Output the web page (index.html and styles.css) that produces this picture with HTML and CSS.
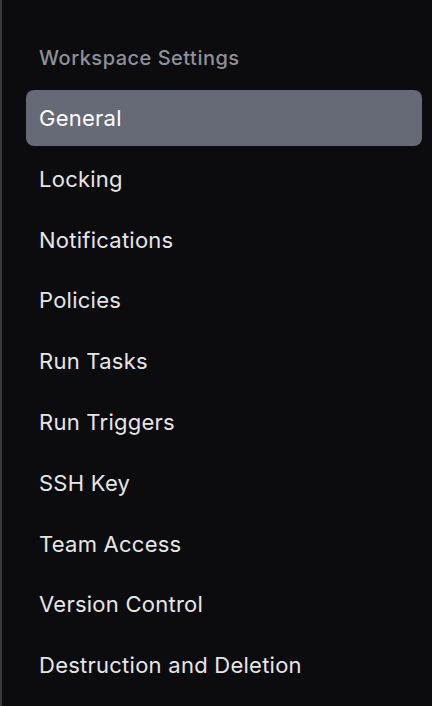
FILE: index.html
```html
<!DOCTYPE html>
<html lang="en">
<head>
<meta charset="utf-8">
<title>Workspace Settings</title>
<link rel="stylesheet" href="styles.css">
</head>
<body>
<nav class="sidebar">
  <h2 class="sidebar-title">Workspace Settings</h2>
  <ul class="nav-list">
    <li><a class="nav-item active" href="#">General</a></li>
    <li><a class="nav-item" href="#">Locking</a></li>
    <li><a class="nav-item" href="#">Notifications</a></li>
    <li><a class="nav-item" href="#">Policies</a></li>
    <li><a class="nav-item" href="#">Run Tasks</a></li>
    <li><a class="nav-item" href="#">Run Triggers</a></li>
    <li><a class="nav-item" href="#">SSH Key</a></li>
    <li><a class="nav-item" href="#">Team Access</a></li>
    <li><a class="nav-item" href="#">Version Control</a></li>
    <li><a class="nav-item" href="#">Destruction and Deletion</a></li>
  </ul>
</nav>
</body>
</html>
```
FILE: styles.css
```css
html, body {
  margin: 0;
  padding: 0;
  height: 100%;
  background: #0c0c0e;
}
body {
  font-family: Inter, "Noto Sans", sans-serif;
  -webkit-font-smoothing: antialiased;
}
.sidebar {
  box-sizing: border-box;
  min-height: 100%;
  border-left: 2px solid #3b3b3f;
  padding: 42px 10px 0 24px;
}
.sidebar-title {
  margin: 0 0 16px 13px;
  font-size: 20px;
  line-height: 32px;
  font-weight: 500;
  letter-spacing: 0.5px;
  color: #8d919b;
}
.nav-list {
  list-style: none;
  margin: 0;
  padding: 0;
  display: flex;
  flex-direction: column;
  gap: 4.8px;
}
.nav-item {
  display: flex;
  align-items: center;
  height: 56px;
  padding-left: 13px;
  border-radius: 8px;
  font-size: 22px;
  font-weight: 400;
  letter-spacing: 0.25px;
  color: #e6e6e8;
  text-decoration: none;
}
.nav-item.active {
  background: #656a76;
  color: #ffffff;
}
```
